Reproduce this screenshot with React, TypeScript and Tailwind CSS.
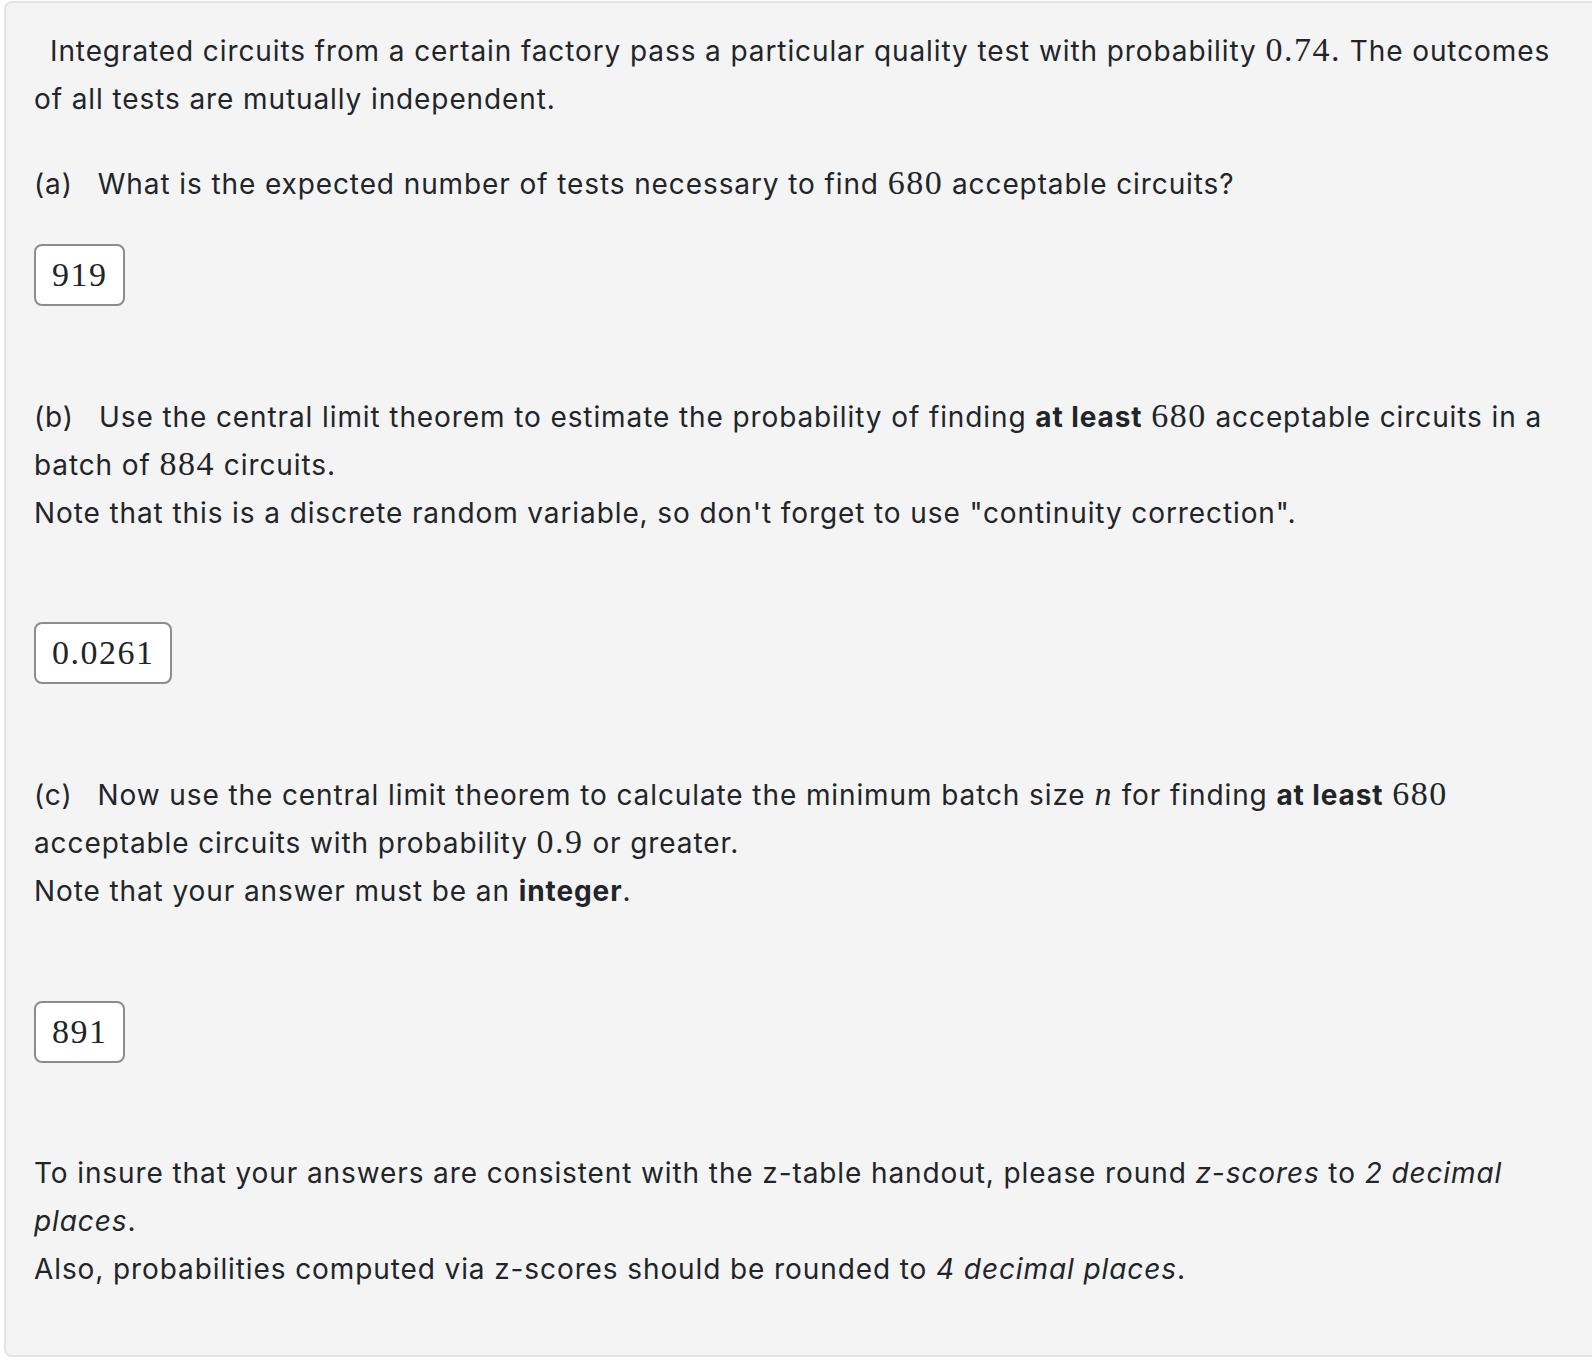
import React from "react";

const serif = '"Liberation Serif", "DejaVu Serif", serif';

const M = ({ children, i }: { children: React.ReactNode; i?: boolean }) => (
  <span
    className={`text-[34px] leading-[0] tracking-[1.5px] ${i ? "italic" : ""}`}
    style={{ fontFamily: serif }}
  >
    {children}
  </span>
);

const Answer = ({ value }: { value: string }) => (
  <div className="inline-flex h-[62px] items-center rounded-[8px] border-2 border-[#8c8c8c] bg-white pl-[16px] pr-[15px]">
    <span className="text-[34px] leading-none tracking-[1.5px] text-[#212529]" style={{ fontFamily: serif }}>
      {value}
    </span>
  </div>
);

const Label = ({ children }: { children: React.ReactNode }) => (
  <span className="mr-[25px] inline-block">{children}</span>
);

export default function App() {
  return (
    <div className="min-h-screen bg-white pl-[4px] pt-[1px]">
      <div
        className="w-[1620px] rounded-[8px] border-2 border-[#e3e3e3] bg-[#f4f4f4] pb-[62px] pl-[28px] pt-[24px] text-[28px] leading-[48px] tracking-[0.9px] text-[#212529]"
        style={{ fontFamily: 'Inter, "Noto Sans", sans-serif' }}
      >
        <div className="w-[1542px]">
          <p className="indent-[16px]">
            Integrated circuits from a certain factory pass a particular quality test with probability{" "}
            <M>0.74.</M> The outcomes of all tests are mutually independent.
          </p>

          <p className="mt-[37px]">
            <Label>(a)</Label>What is the expected number of tests necessary to find <M>680</M> acceptable
            circuits?
          </p>
          <div className="mt-[36px]">
            <Answer value="919" />
          </div>

          <p className="mt-[87px]">
            <Label>(b)</Label>Use the central limit theorem to estimate the probability of finding{" "}
            <b>at least</b> <M>680</M> acceptable circuits in a batch of <M>884</M> circuits.
          </p>
          <p>Note that this is a discrete random variable, so don't forget to use "continuity correction".</p>
          <div className="mt-[85px]">
            <Answer value="0.0261" />
          </div>

          <p className="mt-[87px]">
            <Label>(c)</Label>Now use the central limit theorem to calculate the minimum batch size{" "}
            <M i>n</M> for finding <b>at least</b> <M>680</M> acceptable circuits with probability{" "}
            <M>0.9</M> or greater.
          </p>
          <p>
            Note that your answer must be an <b>integer</b>.
          </p>
          <div className="mt-[86px]">
            <Answer value="891" />
          </div>

          <p className="mt-[86px]">
            To insure that your answers are consistent with the z-table handout, please round{" "}
            <i>z-scores</i> to <i>2 decimal places</i>.
          </p>
          <p>
            Also, probabilities computed via z-scores should be rounded to <i>4 decimal places</i>.
          </p>
        </div>
      </div>
    </div>
  );
}
